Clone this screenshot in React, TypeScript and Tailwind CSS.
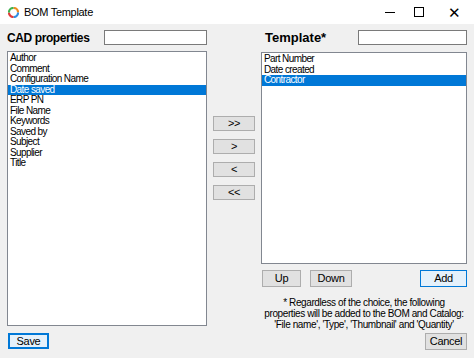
import React from "react";

const cadProps = [
  "Author",
  "Comment",
  "Configuration Name",
  "Date saved",
  "ERP PN",
  "File Name",
  "Keywords",
  "Saved by",
  "Subject",
  "Supplier",
  "Title",
];

const templateProps = ["Part Number", "Date created", "Contractor"];

function ListBox({
  items,
  selected,
  className,
}: {
  items: string[];
  selected: string;
  className: string;
}) {
  return (
    <div className={`bg-white border border-[#828790] pt-[1px] ${className}`}>
      {items.map((item) => (
        <div
          key={item}
          className={`h-[10.5px] leading-[10.5px] pl-[2px] whitespace-nowrap ${
            item === selected ? "bg-[#0078d7] text-white" : "text-black"
          }`}
        >
          {item}
        </div>
      ))}
    </div>
  );
}

function Btn({
  label,
  className,
  primary,
}: {
  label: string;
  className: string;
  primary?: boolean;
}) {
  return (
    <button
      className={`flex items-center justify-center text-[11px] leading-none text-black tracking-[-0.3px] ${
        primary
          ? "bg-[#e5f1fb] border border-[#0078d7]"
          : "bg-[#e1e1e1] border border-[#adadad]"
      } ${className}`}
    >
      {label}
    </button>
  );
}

function AppIcon() {
  return (
    <svg width="11" height="11" viewBox="0 0 12 12">
      <path d="M6 1 A5 5 0 0 1 11 6" stroke="#ef8a1e" strokeWidth="2.4" fill="none" />
      <path d="M11 6 A5 5 0 0 1 6 11" stroke="#2f8de4" strokeWidth="2.4" fill="none" />
      <path d="M6 11 A5 5 0 0 1 1 6" stroke="#e23b3b" strokeWidth="2.4" fill="none" />
      <path d="M1 6 A5 5 0 0 1 6 1" stroke="#3fb34f" strokeWidth="2.4" fill="none" />
    </svg>
  );
}

export default function App() {
  return (
    <div
      className="w-[474px] h-[358px] overflow-hidden flex flex-col bg-[#f0f0f0] text-[10px] tracking-[-0.6px]"
      style={{ fontFamily: '"Liberation Sans", Arial, sans-serif' }}
    >
      {/* title bar */}
      <div className="h-[24px] bg-white flex items-center pl-[8px]">
        <AppIcon />
        <span className="ml-[5px] text-[11px] tracking-[-0.3px] text-black">BOM Template</span>
        <div className="ml-auto flex items-center h-full">
          <div className="w-[28px] flex justify-center">
            <div className="w-[10px] h-[1px] bg-black" />
          </div>
          <div className="w-[28px] flex justify-center ml-[1px]">
            <div className="w-[10px] h-[10px] border border-black" />
          </div>
          <div className="w-[40px] flex justify-center ml-[1px] text-[15px] font-light text-black leading-none">
            ✕
          </div>
        </div>
      </div>

      {/* body */}
      <div className="flex pt-[6px] pl-[7px]">
        {/* left column */}
        <div className="w-[200px] flex flex-col">
          <div className="h-[15px] flex items-center justify-between">
            <span className="text-[12px] font-bold text-black tracking-[-0.4px]">CAD properties</span>
            <div className="w-[103px] h-[15px] bg-white border border-[#7a7a7a]" />
          </div>
          <ListBox
            items={cadProps}
            selected="Date saved"
            className="mt-[6px] h-[275px] w-[200px]"
          />
          <Btn
            label="Save"
            primary
            className="mt-[7px] w-[41px] h-[16px] ml-[1px] border-[2px]"
          />
        </div>

        {/* middle buttons */}
        <div className="w-[42px] ml-[6px] flex flex-col gap-[8px] pt-[86px]">
          <Btn label=">>" className="h-[15px] w-[42px] text-[10px]" />
          <Btn label=">" className="h-[15px] w-[42px] text-[10px]" />
          <Btn label="<" className="h-[15px] w-[42px] text-[10px]" />
          <Btn label="<<" className="h-[15px] w-[42px] text-[10px]" />
        </div>

        {/* right column */}
        <div className="w-[206px] ml-[6px] flex flex-col">
          <div className="h-[15px] flex items-center justify-between">
            <span className="ml-[4px] text-[13px] font-bold text-black tracking-[0px]">Template*</span>
            <div className="w-[109px] h-[15px] bg-white border border-[#7a7a7a]" />
          </div>
          <ListBox
            items={templateProps}
            selected="Contractor"
            className="mt-[7px] h-[212px] w-[206px]"
          />
          <div className="mt-[6px] flex h-[17px]">
            <Btn label="Up" className="w-[39px] h-[17px] ml-[1px]" />
            <Btn label="Down" className="w-[42px] h-[17px] ml-[9px]" />
            <Btn label="Add" primary className="w-[47px] h-[17px] ml-auto" />
          </div>
          <div className="mt-[10px] text-center text-[10px] leading-[11px] tracking-[-0.4px] text-black">
            <div>* Regardless of the choice, the following</div>
            <div className="whitespace-nowrap">properties will be added to the BOM and Catalog:</div>
            <div>'File name', 'Type', 'Thumbnail' and 'Quantity'</div>
          </div>
          <div className="mt-[3px] flex justify-end">
            <Btn label="Cancel" className="w-[42px] h-[17px]" />
          </div>
        </div>
      </div>
    </div>
  );
}
